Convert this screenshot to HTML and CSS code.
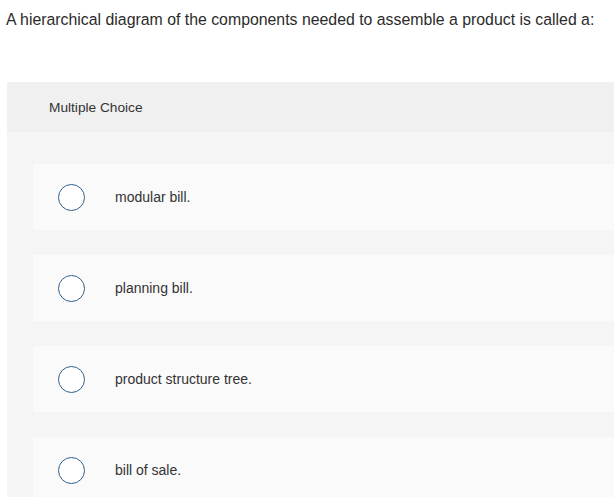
FILE: index.html
```html
<!DOCTYPE html>
<html>
<head>
<meta charset="utf-8">
<link rel="stylesheet" href="styles.css">
</head>
<body>
<div class="page">
  <p class="question">A hierarchical diagram of the components needed to assemble a product is called a:</p>
  <div class="panel">
    <div class="panel-head">Multiple Choice</div>
    <div class="panel-body">
      <div class="option"><span class="radio"></span><span class="label">modular bill.</span></div>
      <div class="option"><span class="radio"></span><span class="label">planning bill.</span></div>
      <div class="option"><span class="radio"></span><span class="label">product structure tree.</span></div>
      <div class="option"><span class="radio"></span><span class="label">bill of sale.</span></div>
    </div>
  </div>
</div>
</body>
</html>
```

FILE: styles.css
```css
html, body {
  margin: 0;
  padding: 0;
  background: #ffffff;
}
.page {
  height: 497px;
  overflow: hidden;
  font-family: "Liberation Sans", Arial, sans-serif;
  color: #333333;
}
.question {
  margin: 0;
  padding: 10px 0 0 6px;
  font-size: 15.85px;
  line-height: 20px;
  color: #2b2b2b;
  white-space: nowrap;
}
.panel {
  margin: 52px 0 0 7px;
  background: #f5f5f5;
}
.panel-head {
  height: 50px;
  background: #f0f0f0;
  display: flex;
  align-items: center;
  padding-left: 42px;
  font-size: 13.7px;
  color: #333333;
}
.panel-body {
  padding: 32px 0 0 26px;
  display: flex;
  flex-direction: column;
  gap: 25px;
}
.option {
  height: 66px;
  background: #fafafa;
  display: flex;
  align-items: center;
  padding-left: 25px;
}
.radio {
  width: 25px;
  height: 25px;
  border: 1.5px solid #2f5f8c;
  border-radius: 50%;
  background: #ffffff;
  flex: none;
}
.label {
  margin-left: 30px;
  font-size: 14px;
  color: #333333;
}
```
